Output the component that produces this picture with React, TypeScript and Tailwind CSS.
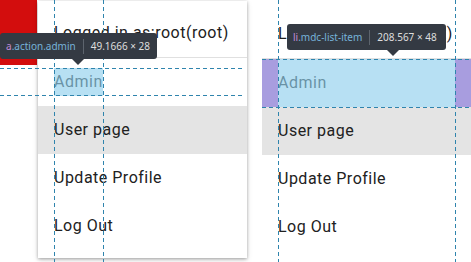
import React from "react";

const roboto = { fontFamily: "Roboto, 'Liberation Sans', sans-serif" };

function Tooltip({
  tag,
  cls,
  dims,
  className,
  arrowLeft,
}: {
  tag: string;
  cls: string;
  dims: string;
  className: string;
  arrowLeft: string;
}) {
  return (
    <div
      className={`absolute z-20 flex items-center h-[26px] rounded-[3px] bg-[#343a43] px-[6px] text-[10px] leading-none whitespace-nowrap font-['Noto_Sans',sans-serif] ${className}`}
    >
      <span className="text-[#c28bd6]">{tag}</span>
      <span className="text-[#76b3d9]">{cls}</span>
      <span className="mx-[7px] h-[15px] w-px shrink-0 bg-[#5d646d]" />
      <span className="text-[#dedede]">{dims}</span>
      <span
        className={`absolute top-full ${arrowLeft} h-0 w-0 border-l-[6px] border-r-[6px] border-t-[6px] border-l-transparent border-r-transparent border-t-[#343a43]`}
      />
    </div>
  );
}

function Row({
  children,
  className = "",
}: {
  children: React.ReactNode;
  className?: string;
}) {
  return (
    <div
      className={`relative flex h-12 items-center whitespace-nowrap px-4 text-[16px] tracking-[0.5px] text-[#212121] ${className}`}
    >
      {children}
    </div>
  );
}

function Menu({ variant }: { variant: "left" | "right" }) {
  return (
    <div style={roboto}>
      <Row>Logged in as:root(root)</Row>
      <div className="h-px bg-[#e0e0e0]" />
      <Row>
        {variant === "left" ? (
          <span className="relative inline-flex h-7 items-center">
            Admin
            <span className="absolute inset-0 bg-[rgba(144,207,237,0.65)]" />
          </span>
        ) : (
          <>
            Admin
            <span className="absolute inset-0 flex">
              <span className="w-4 bg-[rgba(121,104,206,0.65)]" />
              <span className="flex-1 bg-[rgba(144,207,237,0.65)]" />
              <span className="w-4 bg-[rgba(121,104,206,0.65)]" />
            </span>
          </>
        )}
      </Row>
      <Row className="bg-[#e4e4e4]">User page</Row>
      <Row>Update Profile</Row>
      <Row>Log Out</Row>
    </div>
  );
}

function Guides({
  xs,
  ys,
  w,
  h,
}: {
  xs: number[];
  ys: number[];
  w: number;
  h: number;
}) {
  return (
    <svg
      className="pointer-events-none absolute left-0 top-0 z-10"
      width={w}
      height={h}
      viewBox={`0 0 ${w} ${h}`}
    >
      {xs.map((x) => (
        <line
          key={"x" + x}
          x1={x + 0.5}
          x2={x + 0.5}
          y1={0}
          y2={h}
          stroke="#2f84ad"
          strokeWidth={1}
          strokeDasharray="4 3"
        />
      ))}
      {ys.map((y) => (
        <line
          key={"y" + y}
          x1={0}
          x2={w}
          y1={y + 0.5}
          y2={y + 0.5}
          stroke="#2f84ad"
          strokeWidth={1}
          strokeDasharray="4 3"
        />
      ))}
    </svg>
  );
}

export default function App() {
  return (
    <div className="flex h-[262px] w-[471px] overflow-hidden bg-white">
      {/* Left panel */}
      <div className="relative flex h-full w-[247px] shrink-0 items-start">
        <div className="h-[65px] w-[37px] shrink-0 bg-[#d30d0d]" />
        <div className="ml-px mt-px w-[209px] shrink-0 bg-white py-2 shadow-[0_1px_3px_rgba(0,0,0,0.3),0_2px_6px_rgba(0,0,0,0.12)]">
          <Menu variant="left" />
        </div>
        <Guides xs={[54, 103]} ys={[68, 95]} w={245} h={262} />
        <Tooltip
          tag="a"
          cls=".action.admin"
          dims="49.1666 × 28"
          className="left-0 top-[33px] w-[157px]"
          arrowLeft="left-[72px]"
        />
      </div>

      <div className="w-[15px] shrink-0" />

      {/* Right panel */}
      <div className="relative h-full w-[209px] shrink-0 overflow-hidden">
        <div className="mt-[2px] w-[209px] bg-white py-2">
          <Menu variant="right" />
        </div>
        <Guides xs={[16, 193]} ys={[59, 107]} w={209} h={262} />
        <Tooltip
          tag="li"
          cls=".mdc-list-item"
          dims="208.567 × 48"
          className="left-[25px] top-[24px] w-[159px]"
          arrowLeft="left-[100px]"
        />
      </div>
    </div>
  );
}
